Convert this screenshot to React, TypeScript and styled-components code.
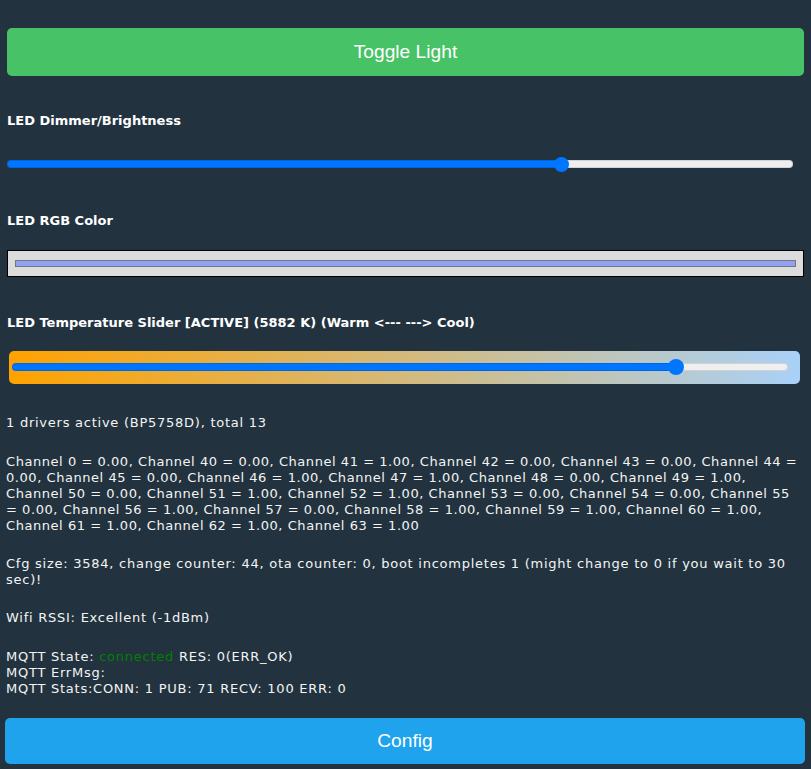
import { useState } from 'react';
import styled, { createGlobalStyle } from 'styled-components';

const GlobalStyle = createGlobalStyle`
  html, body {
    margin: 0;
    padding: 0;
    background: #22333f;
  }
  body {
    font-family: "DejaVu Sans", Verdana, sans-serif;
    color: #f4f4f4;
  }
`;

const Page = styled.div`
  box-sizing: border-box;
  min-height: 769px;
  padding: 28px 7px 5px 6px;
  display: flex;
  flex-direction: column;
`;

const ActionButton = styled.button<{ $tone: 'green' | 'blue'; $height: number }>`
  display: block;
  width: 100%;
  height: ${p => p.$height}px;
  border: 0;
  border-radius: 5px;
  background: ${p => (p.$tone === 'green' ? '#47c266' : '#1fa3ec')};
  color: #fff;
  font-family: "Liberation Sans", Arial, sans-serif;
  font-size: 19.2px;
  cursor: pointer;
`;

const TopButton = styled(ActionButton)`
  width: calc(100% - 1px);
  margin-left: 1px;
`;

const BottomButton = styled(ActionButton)`
  width: calc(100% + 2px);
  margin: 21px 0 0 -1px;
`;

const Label = styled.h5<{ $gap: number }>`
  margin: ${p => p.$gap}px 0 0 1px;
  font: bold 13px/16px "DejaVu Sans", Verdana, sans-serif;
  color: #fff;
`;

// track fill follows the thumb: --fill is set from the current value
const Range = styled.input.attrs({ type: 'range' })<{ $thumb: number }>`
  -webkit-appearance: none;
  appearance: none;
  display: block;
  box-sizing: border-box;
  height: 8px;
  margin: 0;
  border-radius: 4px;
  background: linear-gradient(
    to right,
    #0075ff calc(${p => p.$thumb / 2}px + var(--fill) * (100% - ${p => p.$thumb}px)),
    #efefef 0
  );
  box-shadow: inset 0 0 0 1px rgba(0, 0, 0, 0.12);
  outline: none;

  &::-webkit-slider-thumb {
    -webkit-appearance: none;
    appearance: none;
    width: ${p => p.$thumb}px;
    height: ${p => p.$thumb}px;
    border: 0;
    border-radius: 50%;
    background: #0075ff;
    cursor: pointer;
  }
`;

const DimmerRange = styled(Range)`
  width: auto;
  margin: 31px 11px 9px 1px;
`;

const ColorPicker = styled.input.attrs({ type: 'color' })`
  display: block;
  box-sizing: border-box;
  width: calc(100% - 1px);
  height: 27px;
  margin: 21px 0 0 1px;
  padding: 0;
  border: 1px solid #000;
  background: #dcdcdc;
  cursor: pointer;

  &::-webkit-color-swatch-wrapper {
    padding: 9px 7px;
  }
  &::-webkit-color-swatch {
    border: 1px solid #777;
    border-radius: 0;
  }
`;

const TemperatureBox = styled.div`
  box-sizing: border-box;
  height: 33px;
  margin: 20px 4px 0 3px;
  padding: 0 12px 2px 3px;
  display: flex;
  align-items: center;
  border-radius: 5px;
  background: linear-gradient(to right, #ffa200, #a9d1f8);
`;

const TemperatureRange = styled(Range)`
  flex: 1;
  min-width: 0;
`;

const Info = styled.p<{ $gap: number }>`
  margin: ${p => p.$gap}px 6px 0 0;
  font-size: 13px;
  line-height: 16px;
  letter-spacing: 0.75px;
`;

const ChannelDump = styled(Info)`
  letter-spacing: 0.55px;
`;

const Connected = styled.span`
  color: #008000;
`;

const channels: [number, number][] = [
  [0, 0], [40, 0], [41, 1], [42, 0], [43, 0], [44, 0], [45, 0], [46, 1], [47, 1],
  [48, 0], [49, 1], [50, 0], [51, 1], [52, 1], [53, 0], [54, 0], [55, 0], [56, 1],
  [57, 0], [58, 1], [59, 1], [60, 1], [61, 1], [62, 1], [63, 1],
];

const TEMP_MIN = 2000;
const TEMP_MAX = 6500;

export default function App() {
  const [dimmer, setDimmer] = useState(71);
  const [color, setColor] = useState('#90a0f5');
  const [kelvin, setKelvin] = useState(5882);

  const channelText = channels
    .map(([ch, v]) => `Channel ${ch} = ${v.toFixed(2)}`)
    .join(', ');

  return (
    <>
      <GlobalStyle />
      <Page>
        <TopButton $tone="green" $height={48}>
          Toggle Light
        </TopButton>

        <Label $gap={37}>LED Dimmer/Brightness</Label>
        <DimmerRange
          $thumb={15}
          min={0}
          max={100}
          value={dimmer}
          onChange={e => setDimmer(Number(e.target.value))}
          style={{ ['--fill' as string]: dimmer / 100 }}
        />

        <Label $gap={36}>LED RGB Color</Label>
        <ColorPicker value={color} onChange={e => setColor(e.target.value)} />

        <Label $gap={38}>
          LED Temperature Slider [ACTIVE] ({kelvin} K) (Warm &lt;--- ---&gt; Cool)
        </Label>
        <TemperatureBox>
          <TemperatureRange
            $thumb={16}
            min={TEMP_MIN}
            max={TEMP_MAX}
            value={kelvin}
            onChange={e => setKelvin(Number(e.target.value))}
            style={{ ['--fill' as string]: (kelvin - TEMP_MIN) / (TEMP_MAX - TEMP_MIN) }}
          />
        </TemperatureBox>

        <Info $gap={31}>1 drivers active (BP5758D), total 13</Info>
        <ChannelDump $gap={22.7}>{channelText}</ChannelDump>
        <Info $gap={22}>
          Cfg size: 3584, change counter: 44, ota counter: 0, boot incompletes 1 (might change to 0 if
          you wait to 30 sec)!
        </Info>
        <Info $gap={22}>Wifi RSSI: Excellent (-1dBm)</Info>
        <Info $gap={23.3}>
          MQTT State: <Connected>connected</Connected> RES: 0(ERR_OK)
          <br />
          MQTT ErrMsg:
          <br />
          MQTT Stats:CONN: 1 PUB: 71 RECV: 100 ERR: 0
        </Info>

        <BottomButton $tone="blue" $height={46}>
          Config
        </BottomButton>
      </Page>
    </>
  );
}
